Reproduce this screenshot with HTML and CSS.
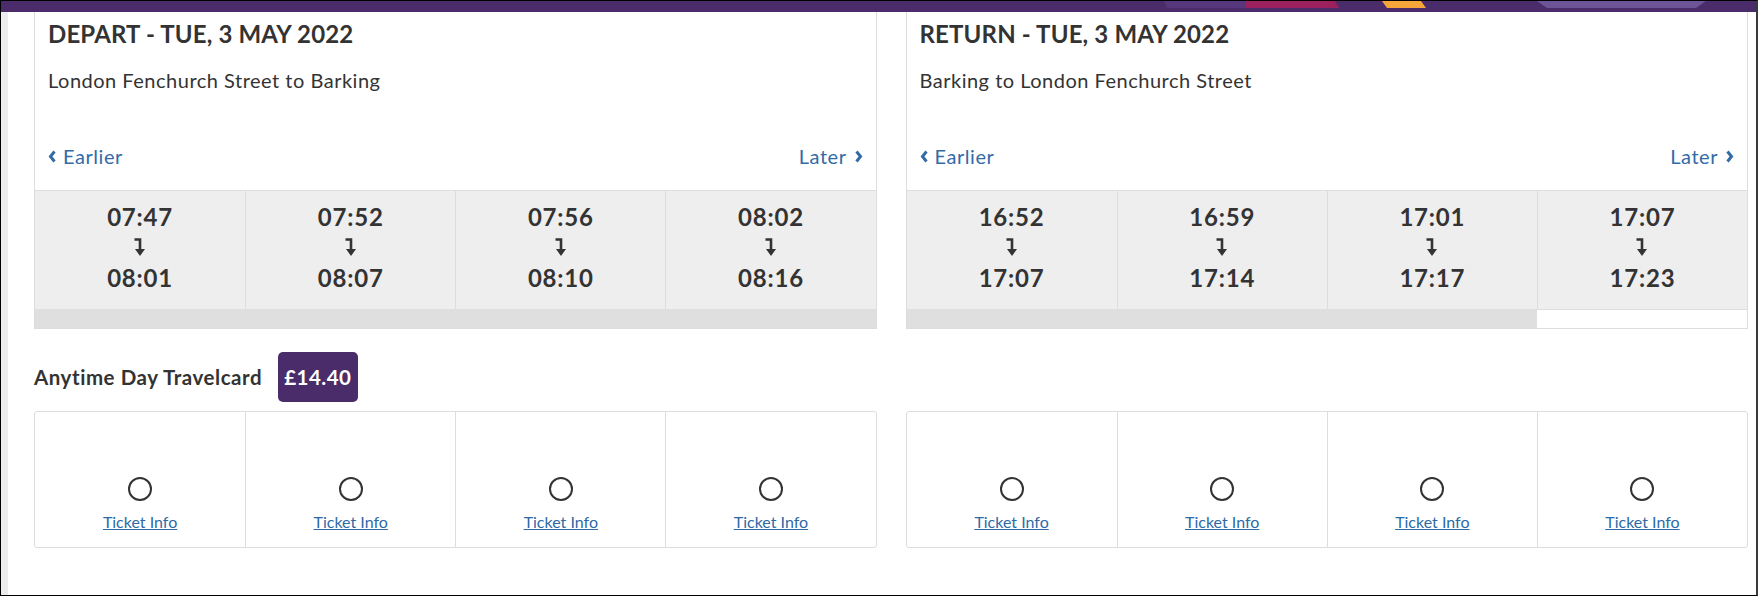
FILE: index.html
```html
<!DOCTYPE html>
<html lang="en">
  <head>
    <meta charset="UTF-8" />
    <meta name="viewport" content="width=device-width, initial-scale=1.0" />
    <title>Choose your train</title>
    <link rel="stylesheet" href="styles.css">
  </head>
  <body>
    <div class="frame">
      <div class="band">
        <svg viewBox="0 0 1755 11" preserveAspectRatio="none">
          <polygon points="1163,0 1245,0 1245,7 1166,7" fill="#56377c" />
          <polygon points="1245,0 1334,0 1338,7 1245,7" fill="#9c1f5e" />
          <polygon points="1381,0 1420,0 1425,7 1386,7" fill="#f5a53a" />
          <polygon points="1536,0 1705,0 1695,7 1546,7" fill="#6d5496" />
        </svg>
      </div>

      <div class="body">
        <div class="rail"></div>

        <main class="main">
          <div class="journeys">
            <section class="card">
              <div class="card-head">
                <h2>DEPART - TUE, 3 MAY 2022</h2>
                <p class="route">London Fenchurch Street to Barking</p>
                <div class="nav">
                  <a class="nav-link" href="#">
                    <svg class="chev" viewBox="0 0 9 13"><polyline points="6.5,1.5 2.5,6.5 6.5,11.5" /></svg>Earlier
                  </a>
                  <a class="nav-link" href="#">
                    Later<svg class="chev chev-r" viewBox="0 0 9 13"><polyline points="2.5,1.5 6.5,6.5 2.5,11.5" /></svg>
                  </a>
                </div>
              </div>
              <div class="times">
                <div class="slot">
                  <div class="slot-time"><span>07:47</span><svg class="arrow" viewBox="0 0 12 18"><path d="M0.5 1.5H6V12" /><polygon points="1,11 11,11 6,18" /></svg><span>08:01</span></div>
                  <div class="slot-foot"></div>
                </div>
                <div class="slot">
                  <div class="slot-time"><span>07:52</span><svg class="arrow" viewBox="0 0 12 18"><path d="M0.5 1.5H6V12" /><polygon points="1,11 11,11 6,18" /></svg><span>08:07</span></div>
                  <div class="slot-foot"></div>
                </div>
                <div class="slot">
                  <div class="slot-time"><span>07:56</span><svg class="arrow" viewBox="0 0 12 18"><path d="M0.5 1.5H6V12" /><polygon points="1,11 11,11 6,18" /></svg><span>08:10</span></div>
                  <div class="slot-foot"></div>
                </div>
                <div class="slot">
                  <div class="slot-time"><span>08:02</span><svg class="arrow" viewBox="0 0 12 18"><path d="M0.5 1.5H6V12" /><polygon points="1,11 11,11 6,18" /></svg><span>08:16</span></div>
                  <div class="slot-foot"></div>
                </div>
              </div>
            </section>

            <section class="card">
              <div class="card-head">
                <h2>RETURN - TUE, 3 MAY 2022</h2>
                <p class="route">Barking to London Fenchurch Street</p>
                <div class="nav">
                  <a class="nav-link" href="#">
                    <svg class="chev" viewBox="0 0 9 13"><polyline points="6.5,1.5 2.5,6.5 6.5,11.5" /></svg>Earlier
                  </a>
                  <a class="nav-link" href="#">
                    Later<svg class="chev chev-r" viewBox="0 0 9 13"><polyline points="2.5,1.5 6.5,6.5 2.5,11.5" /></svg>
                  </a>
                </div>
              </div>
              <div class="times">
                <div class="slot">
                  <div class="slot-time"><span>16:52</span><svg class="arrow" viewBox="0 0 12 18"><path d="M0.5 1.5H6V12" /><polygon points="1,11 11,11 6,18" /></svg><span>17:07</span></div>
                  <div class="slot-foot"></div>
                </div>
                <div class="slot">
                  <div class="slot-time"><span>16:59</span><svg class="arrow" viewBox="0 0 12 18"><path d="M0.5 1.5H6V12" /><polygon points="1,11 11,11 6,18" /></svg><span>17:14</span></div>
                  <div class="slot-foot"></div>
                </div>
                <div class="slot">
                  <div class="slot-time"><span>17:01</span><svg class="arrow" viewBox="0 0 12 18"><path d="M0.5 1.5H6V12" /><polygon points="1,11 11,11 6,18" /></svg><span>17:17</span></div>
                  <div class="slot-foot"></div>
                </div>
                <div class="slot">
                  <div class="slot-time"><span>17:07</span><svg class="arrow" viewBox="0 0 12 18"><path d="M0.5 1.5H6V12" /><polygon points="1,11 11,11 6,18" /></svg><span>17:23</span></div>
                  <div class="slot-foot open"></div>
                </div>
              </div>
            </section>
          </div>

          <div class="fare">
            <div class="fare-head">
              <span class="fare-name">Anytime Day Travelcard</span>
              <span class="price">£14.40</span>
            </div>
            <div class="fare-grid">
              <div class="opts">
                <div class="opt"><span class="radio"></span><a class="ticket-info" href="#">Ticket Info</a></div>
                <div class="opt"><span class="radio"></span><a class="ticket-info" href="#">Ticket Info</a></div>
                <div class="opt"><span class="radio"></span><a class="ticket-info" href="#">Ticket Info</a></div>
                <div class="opt"><span class="radio"></span><a class="ticket-info" href="#">Ticket Info</a></div>
              </div>
              <div class="opts">
                <div class="opt"><span class="radio"></span><a class="ticket-info" href="#">Ticket Info</a></div>
                <div class="opt"><span class="radio"></span><a class="ticket-info" href="#">Ticket Info</a></div>
                <div class="opt"><span class="radio"></span><a class="ticket-info" href="#">Ticket Info</a></div>
                <div class="opt"><span class="radio"></span><a class="ticket-info" href="#">Ticket Info</a></div>
              </div>
            </div>
          </div>
        </main>
      </div>
    </div>
  </body>
</html>
```

FILE: styles.css
```css
* {
  box-sizing: border-box;
}

body {
  margin: 0;
  background: #fff;
  color: #333;
  font-family: Lato, "Liberation Sans", sans-serif;
}

.frame {
  width: 1758px;
  height: 596px;
  border: 1px solid #000;
  border-right: 2px solid #3a3a3a;
  display: flex;
  flex-direction: column;
  overflow: hidden;
}

.band {
  flex: none;
  height: 11px;
  background: #4b2c6a;
}

.band svg {
  display: block;
  width: 100%;
  height: 11px;
}

.body {
  flex: 1;
  display: flex;
}

.rail {
  width: 7px;
  background: #ececec;
}

.main {
  flex: 1;
  padding: 0 8px 0 26px;
}

.journeys,
.fare-grid {
  display: grid;
  grid-template-columns: 1fr 1fr;
  gap: 29px;
}

/* journey cards */
.card {
  border: 1px solid #ddd;
  border-top: 0;
}

.card-head {
  height: 178px;
  padding: 8px 13px 0;
  display: flex;
  flex-direction: column;
}

.card-head h2 {
  margin: 0;
  font-size: 24px;
  line-height: 28px;
  font-weight: 700;
  letter-spacing: 0.15px;
}

.route {
  margin: 21px 0 0;
  font-size: 20px;
  line-height: 23px;
  letter-spacing: 0.5px;
}

.nav {
  margin-top: auto;
  margin-bottom: 22px;
  display: flex;
  justify-content: space-between;
  font-size: 20px;
  line-height: 23px;
  letter-spacing: 0.55px;
}

.nav-link {
  display: flex;
  align-items: center;
  color: #336ba6;
  text-decoration: none;
}

.chev {
  width: 9px;
  height: 13px;
  margin-right: 6px;
  fill: none;
  stroke: #336ba6;
  stroke-width: 3;
}

.chev-r {
  margin: 0 0 0 7px;
}

.times {
  display: grid;
  grid-template-columns: repeat(4, 1fr);
  border-top: 1px solid #ddd;
}

.slot-time {
  height: 118px;
  padding-top: 12px;
  background: #eee;
  display: flex;
  flex-direction: column;
  align-items: center;
  font-size: 24px;
  line-height: 28px;
  font-weight: 700;
  letter-spacing: 0.8px;
}

.slot + .slot .slot-time {
  border-left: 1px solid #ddd;
}

.arrow {
  width: 12px;
  height: 18px;
  margin: 7px 0 8px;
  fill: #333;
}

.arrow path {
  fill: none;
  stroke: #333;
  stroke-width: 2.6;
}

.slot-foot {
  height: 19px;
  background: #dfdfdf;
}

.slot-foot.open {
  background: #fff;
  border-top: 1px solid #ddd;
}

/* fare row */
.fare-head {
  margin-top: 23px;
  height: 50px;
  display: flex;
  align-items: center;
  gap: 16px;
}

.fare-name {
  font-size: 20.5px;
  font-weight: 700;
  letter-spacing: 0.55px;
}

.price {
  height: 50px;
  padding: 0 6px;
  display: flex;
  align-items: center;
  background: #4b2c6a;
  border-radius: 5px;
  color: #fff;
  font-size: 20.5px;
  font-weight: 700;
  letter-spacing: 0.5px;
}

.fare-grid {
  margin-top: 9px;
}

.opts {
  height: 137px;
  display: grid;
  grid-template-columns: repeat(4, 1fr);
  border: 1px solid #ddd;
  border-radius: 3px;
}

.opt {
  padding-top: 65px;
  display: flex;
  flex-direction: column;
  align-items: center;
}

.opt + .opt {
  border-left: 1px solid #ddd;
}

.radio {
  width: 24px;
  height: 24px;
  border: 2px solid #333;
  border-radius: 50%;
}

.ticket-info {
  margin-top: 12px;
  font-size: 16px;
  line-height: 18px;
  color: #2d6aa6;
  text-decoration: underline;
}
```
